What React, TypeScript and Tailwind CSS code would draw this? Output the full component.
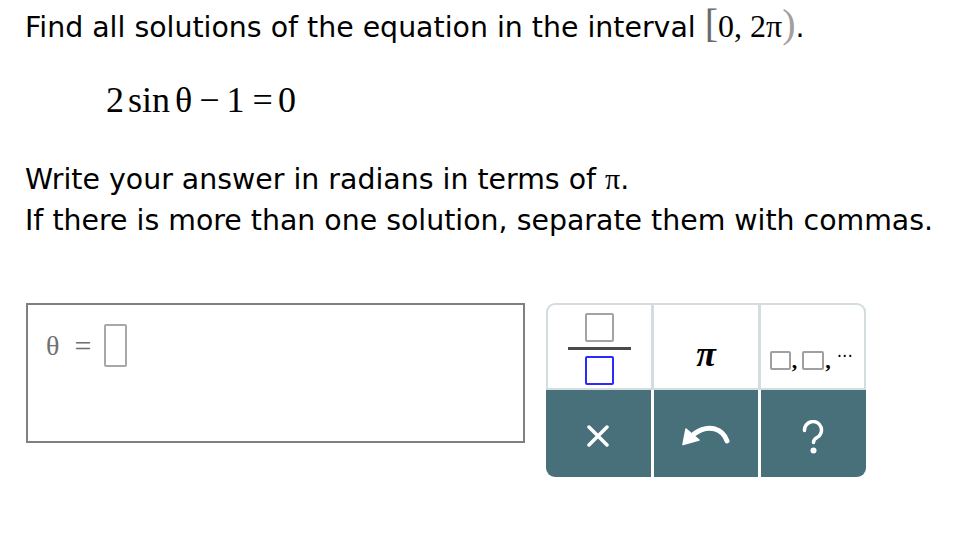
import React from 'react';

const sans = "font-['DejaVu_Sans','Verdana',sans-serif]";
const serif = "font-['Liberation_Serif','Times_New_Roman',serif]";

const Box: React.FC<{ className?: string }> = ({ className = '' }) => (
  <div className={`shrink-0 rounded-[2px] border-2 ${className}`} />
);

const Keypad: React.FC = () => {
  return (
    <div className="w-[320px] shrink-0">
      {/* top row */}
      <div className="grid h-[87px] grid-cols-3 gap-[3px] rounded-t-[9px] bg-[#d3dcdf] px-[2px] pt-[2px] pb-[2px]">
        <div className="flex min-w-0 flex-col items-center rounded-tl-[7px] bg-white pt-[8px]">
          <Box className="h-[29px] w-[29px] border-[#a3a3a3]" />
          <div className="mt-[5px] h-[3px] w-[63px] bg-[#4a4a4a]" />
          <Box className="mt-[6px] h-[29px] w-[29px] border-[#2a2aff]" />
        </div>
        <div className="flex min-w-0 items-center justify-center bg-white pt-[14px]">
          <span className={`${serif} text-[36px] font-bold italic leading-none text-black`}>π</span>
        </div>
        <div className="flex min-w-0 items-center rounded-tr-[7px] bg-white pt-[28px] pl-[9px]">
          <Box className="h-[19px] w-[21px] border-[#a0a0a0]" />
          <span className={`${serif} ml-[1px] text-[22px] font-bold leading-none`}>,</span>
          <Box className="ml-[5px] h-[19px] w-[22px] border-[#a0a0a0]" />
          <span className={`${serif} ml-[1px] text-[22px] font-bold leading-none`}>,</span>
          <span className={`${sans} ml-[6px] mb-[8px] text-[17px] leading-none`}>···</span>
        </div>
      </div>
      {/* bottom row */}
      <div className="grid h-[87px] grid-cols-3 gap-[3px] bg-white">
        <div className="flex items-center justify-center rounded-bl-[9px] bg-[#47707b] pt-[4px]">
          <svg width="24" height="22" viewBox="0 0 24 22">
            <path d="M3 2 L21 20 M21 2 L3 20" stroke="white" strokeWidth="3.5" strokeLinecap="round" fill="none" />
          </svg>
        </div>
        <div className="flex items-center justify-center bg-[#47707b] pt-[2px]">
          <svg width="48" height="23" viewBox="0 0 48 23">
            <path d="M45 18 C41 6 27 0 12 11" stroke="white" strokeWidth="5" strokeLinecap="round" fill="none" />
            <polygon points="1,21.5 4,6 17,17" fill="white" strokeLinejoin="round" stroke="white" strokeWidth="1.5" />
          </svg>
        </div>
        <div className="flex items-center justify-center rounded-br-[9px] bg-[#47707b] pt-[8px]">
          <svg width="26" height="36" viewBox="0 0 26 36">
            <path d="M3.5 10.5 A8.5 8.5 0 1 1 16 17.5 Q12.5 19.5 12.5 22.5" stroke="white" strokeWidth="3.5" strokeLinecap="round" fill="none" />
            <circle cx="12.5" cy="30.5" r="3" fill="white" />
          </svg>
        </div>
      </div>
    </div>
  );
};

export default function App() {
  return (
    <div className={`h-[556px] w-[978px] bg-white pl-[25px] text-black ${sans}`}>
      {/* question */}
      <div className="pt-[8px] text-[28.4px] leading-[40px] whitespace-nowrap">
        Find all solutions of the equation in the interval{' '}
        <span className={`${serif} text-[40px] leading-[20px] text-[#6a6a6a]`}>[</span>
        <span className={`${serif} text-[32px] leading-[20px]`}>0, 2π</span>
        <span className={`${serif} text-[40px] leading-[20px] text-[#a0a0a0]`}>)</span>.
      </div>

      {/* equation */}
      <div className={`${serif} mt-[32px] ml-[81px] flex text-[36px] leading-[40px]`}>
        <span>2</span>
        <span className="ml-[4px]">sin</span>
        <span className="ml-[5px]">θ</span>
        <span className="ml-[7px]">−</span>
        <span className="ml-[7px]">1</span>
        <span className="ml-[8px]">=</span>
        <span className="ml-[5px]">0</span>
      </div>

      {/* instructions */}
      <div className="mt-[38px] text-[28.4px] leading-[41px] whitespace-nowrap">
        <p>
          Write your answer in radians in terms of <span className={`${serif} text-[30px]`}>π</span>.
        </p>
        <p>If there is more than one solution, separate them with commas.</p>
      </div>

      {/* answer area */}
      <div className="mt-[62px] ml-[1px] flex items-start">
        <div className="h-[140px] w-[499px] border-2 border-[#808080] bg-white">
          <div className="mt-[19px] flex h-[43px] items-center pl-[18px] text-[#707070]">
            <span className={`${serif} text-[28px] leading-none`}>θ</span>
            <span className={`${serif} ml-[15px] text-[30px] leading-none`}>=</span>
            <div className="ml-[13px] h-[43px] w-[23px] rounded-[2px] border-2 border-[#a8a8a8]" />
          </div>
        </div>
        <div className="ml-[21px]">
          <Keypad />
        </div>
      </div>
    </div>
  );
}
